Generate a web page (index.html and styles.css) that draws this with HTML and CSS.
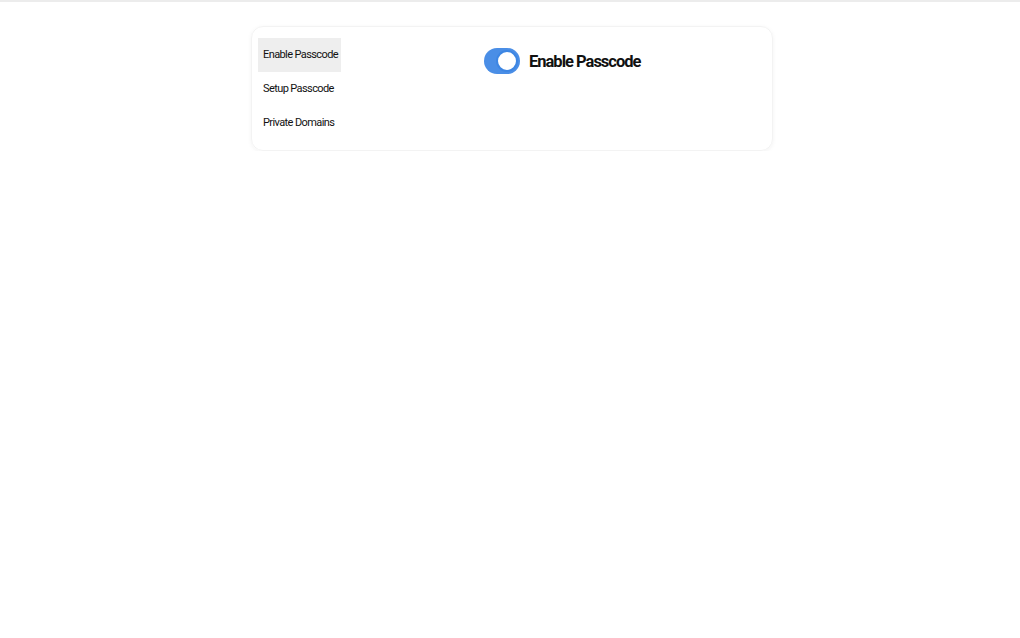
FILE: index.html
```html
<!DOCTYPE html>
<html>
<head>
<meta charset="utf-8">
<title>Passcode Settings</title>
<link rel="stylesheet" href="styles.css">
</head>
<body>
    <div class="topline"></div>
    <div id="main">
        <div class="panel">
            <ul class="nav">
                <li class="active"><a href="#enable">Enable Passcode</a></li>
                <li><a href="#setup">Setup Passcode</a></li>
                <li><a href="#domains">Private Domains</a></li>
            </ul>
            <div class="content">
                <div class="row">
                    <label class="switch on"><span class="knob"></span></label>
                    <h2>Enable Passcode</h2>
                </div>
            </div>
        </div>
    </div>
</body>
</html>
```

FILE: styles.css
```css
html, body { margin:0; padding:0; background:#fff; }
body { font:11px Roboto, "Liberation Sans", Arial, sans-serif; color:#111; }
ul, li, h2 { margin:0; padding:0; list-style:none; }
a { text-decoration:none; color:#111; }

.topline { height:2px; background:#ececec; }

#main { width:522px; margin:24px 0 0 251px; }
.panel { display:flex; padding:11px 6px 10px; border:1px solid #f3f3f3; border-radius:12px; box-shadow:0 1px 4px rgba(0,0,0,0.05); }

.nav { width:83px; flex:none; }
.nav li a { display:block; height:34px; line-height:34px; padding:0 5px; letter-spacing:-0.6px; white-space:nowrap; }
.nav li.active a { background:#eeeeee; }

.content { flex:1; display:flex; padding:10px 0 0 143px; }
.row { display:flex; align-items:center; gap:9px; height:26px; }
.row h2 { font-size:16.5px; font-weight:bold; letter-spacing:-1px; color:#111; }

.switch { position:relative; display:block; width:36px; height:26px; border-radius:13px; background:#4a8ee6; }
.switch .knob { position:absolute; top:2px; right:2px; width:18px; height:18px; border:2px solid #3d86e3; border-radius:50%; background:#fff; }
```
